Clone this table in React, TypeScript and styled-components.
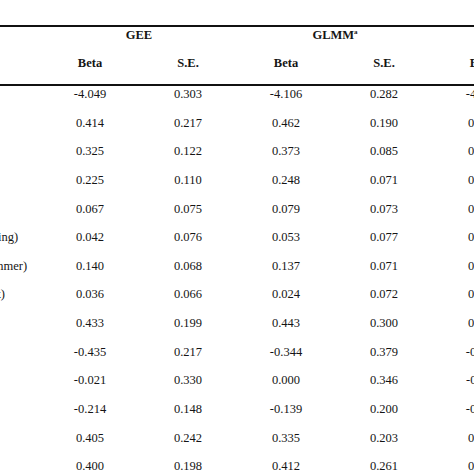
import React from 'react';
import styled, { createGlobalStyle } from 'styled-components';

const GlobalStyle = createGlobalStyle`
  html, body {
    margin: 0;
    padding: 0;
    background: #fff;
    overflow: hidden;
  }

  body {
    font-family: 'Liberation Serif', 'Times New Roman', serif;
    color: #151515;
  }
`;

const Table = styled.div`
  margin: 25px 0 0 -99px;
  width: 728px;
  border-top: 2px solid #111;
  font-size: 12.5px;
  line-height: 17px;
`;

const Row = styled.div<{ $height: number; $rule?: boolean }>`
  display: grid;
  grid-template-columns: 140px repeat(6, 98px);
  height: ${({ $height }) => $height}px;
  border-bottom: ${({ $rule }) => ($rule ? '2px solid #111' : 'none')};
`;

const Label = styled.div`
  padding-left: 39px;
  white-space: nowrap;
`;

const GroupCell = styled.div`
  grid-column: span 2;
  text-align: center;
  font-weight: bold;

  sup {
    font-size: 7px;
    line-height: 0;
  }
`;

const HeadCell = styled.div`
  text-align: center;
  font-weight: bold;
`;

const Cell = styled.div`
  text-align: center;
  white-space: nowrap;
`;

const rows: [string, string[]][] = [
  ['Intercept', ['-4.049', '0.303', '-4.106', '0.282', '-4.231', '0.297']],
  ['Age', ['0.414', '0.217', '0.462', '0.190', '0.428', '0.205']],
  ['Male', ['0.325', '0.122', '0.373', '0.085', '0.341', '0.104']],
  ['Rural', ['0.225', '0.110', '0.248', '0.071', '0.236', '0.093']],
  ['Income', ['0.067', '0.075', '0.079', '0.073', '0.071', '0.074']],
  ['Season (spring)', ['0.042', '0.076', '0.053', '0.077', '0.047', '0.076']],
  ['Season (summer)', ['0.140', '0.068', '0.137', '0.071', '0.139', '0.069']],
  ['Season (wet)', ['0.036', '0.066', '0.024', '0.072', '0.031', '0.068']],
  ['Smoker', ['0.433', '0.199', '0.443', '0.300', '0.438', '0.244']],
  ['Alcohol', ['-0.435', '0.217', '-0.344', '0.379', '-0.392', '0.286']],
  ['Exercise', ['-0.021', '0.330', '0.000', '0.346', '-0.011', '0.337']],
  ['Diet', ['-0.214', '0.148', '-0.139', '0.200', '-0.176', '0.171']],
  ['BMI', ['0.405', '0.242', '0.335', '0.203', '0.372', '0.224']],
  ['Diabetes', ['0.400', '0.198', '0.412', '0.261', '0.406', '0.227']],
];

function App() {
  return (
    <>
      <GlobalStyle />
      <Table>
        <Row $height={28}>
          <Label />
          <GroupCell>GEE</GroupCell>
          <GroupCell>
            GLMM<sup>a</sup>
          </GroupCell>
          <GroupCell>
            GLMM<sup>b</sup>
          </GroupCell>
        </Row>
        <Row $height={29} $rule>
          <Label />
          <HeadCell>Beta</HeadCell>
          <HeadCell>S.E.</HeadCell>
          <HeadCell>Beta</HeadCell>
          <HeadCell>S.E.</HeadCell>
          <HeadCell>Beta</HeadCell>
          <HeadCell>S.E.</HeadCell>
        </Row>
        {rows.map(([label, values]) => (
          <Row key={label} $height={28.65}>
            <Label>{label}</Label>
            {values.map((v, i) => (
              <Cell key={i}>{v}</Cell>
            ))}
          </Row>
        ))}
      </Table>
    </>
  );
}

export default App;
